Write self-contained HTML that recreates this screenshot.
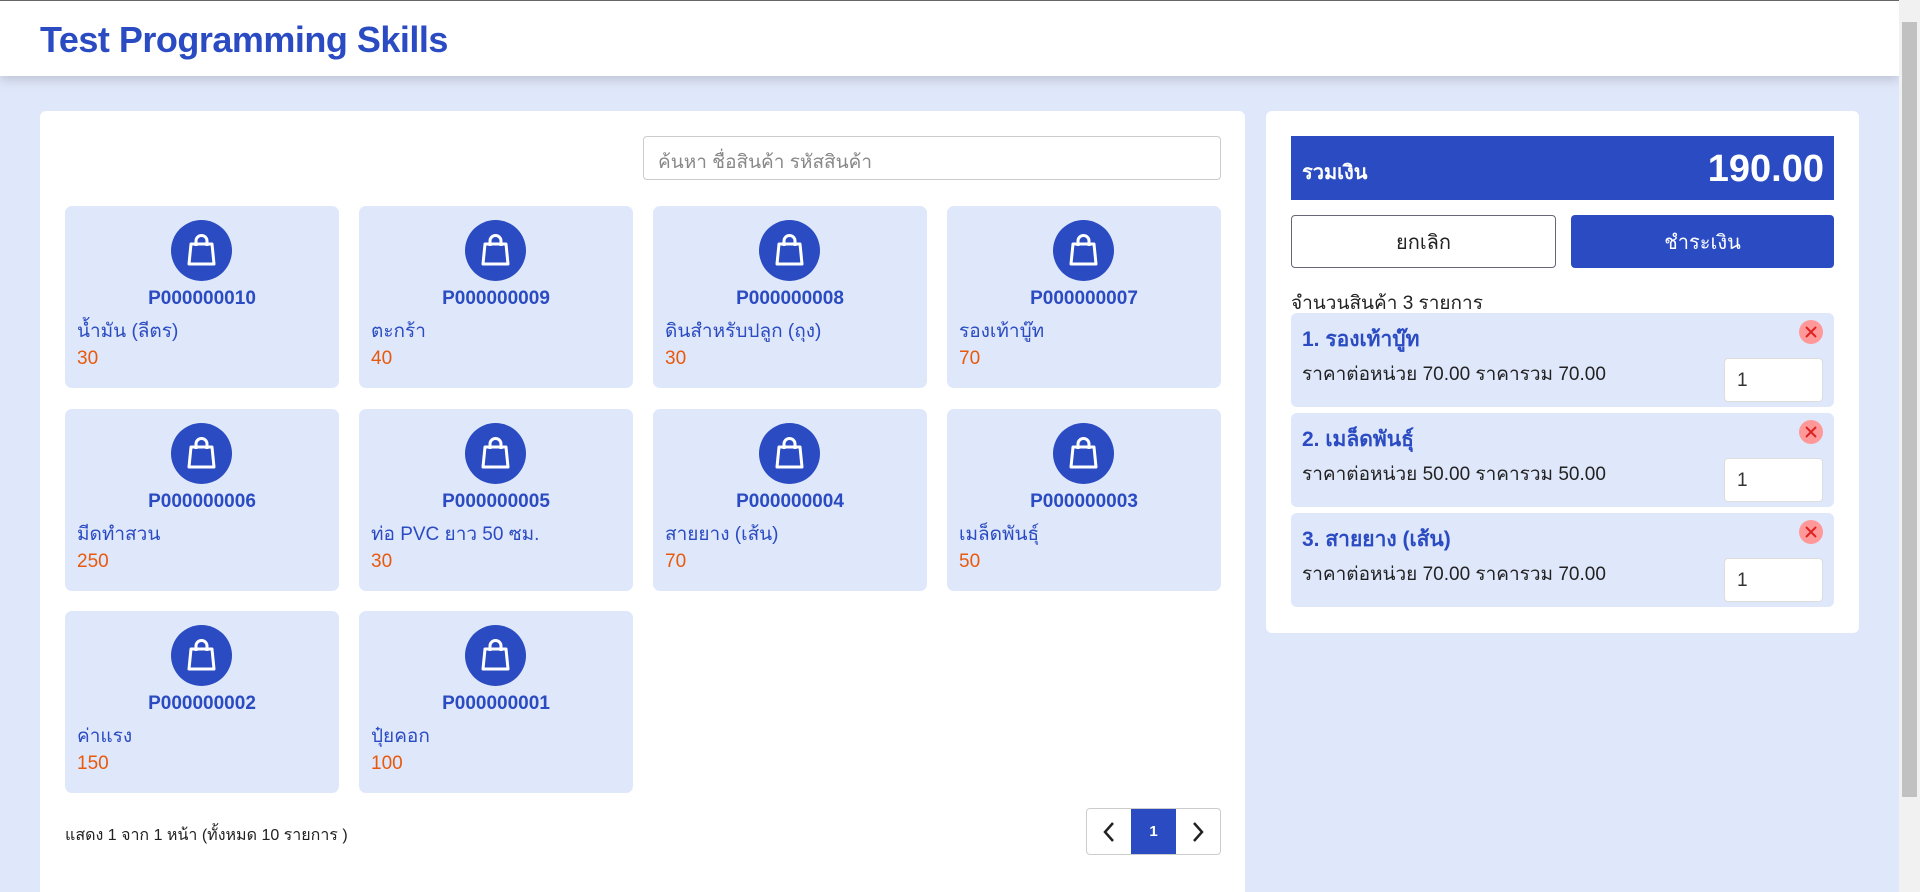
<!DOCTYPE html>
<html><head><meta charset="utf-8"><style>
*{box-sizing:border-box;margin:0;padding:0}
html{width:1920px;height:892px;overflow:hidden}
body{width:1920px;height:892px;overflow:hidden;background:#dfe7fa;font-family:"Liberation Sans","Noto Sans CJK SC",sans-serif;color:#222;position:relative}
.hdr{position:absolute;left:0;top:0;width:1899px;height:76px;background:#fff;border-top:1px solid #666;box-shadow:0 4px 10px rgba(0,0,0,.15)}
.hdr h1{position:absolute;left:40px;top:18px;font-size:36px;font-weight:bold;color:#2a4bc2;letter-spacing:-0.5px}
.sb{position:absolute;left:1899px;top:0;width:21px;height:892px;background:#f1f1f1}
.sb div{position:absolute;left:3px;top:22px;width:15px;height:775px;background:#c1c1c1}
.lp{position:absolute;left:40px;top:111px;width:1205px;height:781px;background:#fff;border-radius:6px 6px 0 0}
.rp{position:absolute;left:1266px;top:111px;width:593px;height:522px;background:#fff;border-radius:6px}
.search{position:absolute;left:603px;top:25px;width:578px;height:44px;border:1px solid #ccc;border-radius:4px;color:#888;font-size:19px;padding:10px 14px}
.card{position:absolute;width:274px;height:182px;background:#dfe7fa;border-radius:7px}
.ic{position:absolute;left:106px;top:14px;width:61px;height:61px;border-radius:50%;background:#2a4bc2}
.ic svg{position:absolute;left:15px;top:13px}
.code{position:absolute;top:82px;width:100%;text-align:center;font-weight:bold;color:#2a4bc2;font-size:19px}
.nm{position:absolute;left:12px;top:110px;color:#2a4bc2;font-size:19px}
.pr{position:absolute;left:12px;top:142px;color:#e8590c;font-size:19px}
.foot{position:absolute;left:25px;top:712px;font-size:16px}
.pg{position:absolute;left:1046px;top:697px;width:135px;height:47px;border:1px solid #ccc;border-radius:4px;display:flex}
.pg div{flex:1;display:flex;align-items:center;justify-content:center;font-size:26px}
.pg .a{background:#2a4bc2;color:#fff;font-size:15px;font-weight:bold}
.tot{position:absolute;left:25px;top:25px;width:543px;height:64px;background:#2a4bc2;color:#fff}
.tot .l{position:absolute;left:11px;top:20px;font-size:20px;font-weight:bold}
.tot .r{position:absolute;right:10px;top:12px;font-size:38px;font-weight:bold}
.btn{position:absolute;top:104px;height:53px;border-radius:4px;font-size:20px;display:flex;align-items:center;justify-content:center}
.cnt{position:absolute;left:25px;top:177px;font-size:19px}
.it{position:absolute;left:25px;width:543px;height:94px;background:#dfe7fa;border-radius:6px}
.it .t{position:absolute;left:11px;top:10px;font-size:21px;font-weight:bold;color:#2a4bc2}
.it .d{position:absolute;left:11px;top:46px;font-size:19px}
.it .q{position:absolute;left:433px;top:45px;width:99px;height:44px;background:#fff;border:1px solid #ddd;border-radius:4px;font-size:19px;padding:11px 12px;color:#333}
.it .x{position:absolute;left:508px;top:7px;width:24px;height:24px;border-radius:50%;background:#f99}
</style></head><body>
<div class="hdr"><h1>Test Programming Skills</h1></div>
<div class="sb"><div></div></div>
<div class="lp">
<div class="search">ค้นหา ชื่อสินค้า รหัสสินค้า</div>
<div class="foot">แสดง 1 จาก 1 หน้า (ทั้งหมด 10 รายการ )</div>
<div class="pg"><div><svg width="14" height="22"><path d="M11 2L3 11l8 9" fill="none" stroke="#222" stroke-width="2.5"/></svg></div><div class="a">1</div><div><svg width="14" height="22"><path d="M3 2l8 9-8 9" fill="none" stroke="#222" stroke-width="2.5"/></svg></div></div>
</div>
<div class="rp">
<div class="tot"><span class="l">รวมเงิน</span><span class="r">190.00</span></div>
<div class="btn" style="left:25px;width:265px;border:1px solid #667">ยกเลิก</div>
<div class="btn" style="left:305px;width:263px;background:#2a4bc2;color:#fff">ชำระเงิน</div>
<div class="cnt">จำนวนสินค้า 3 รายการ</div>
<div class="it" style="top:202px"><div class="t">1. รองเท้าบู๊ท</div><div class="d">ราคาต่อหน่วย 70.00 ราคารวม 70.00</div><div class="q">1</div><div class="x"><svg width="24" height="24"><path d="M7 7L17 17M17 7L7 17" stroke="#d22" stroke-width="2"/></svg></div></div>
<div class="it" style="top:302px"><div class="t">2. เมล็ดพันธุ์</div><div class="d">ราคาต่อหน่วย 50.00 ราคารวม 50.00</div><div class="q">1</div><div class="x"><svg width="24" height="24"><path d="M7 7L17 17M17 7L7 17" stroke="#d22" stroke-width="2"/></svg></div></div>
<div class="it" style="top:402px"><div class="t">3. สายยาง (เส้น)</div><div class="d">ราคาต่อหน่วย 70.00 ราคารวม 70.00</div><div class="q">1</div><div class="x"><svg width="24" height="24"><path d="M7 7L17 17M17 7L7 17" stroke="#d22" stroke-width="2"/></svg></div></div>
</div>
<div style="position:absolute;left:0;top:0">
<div class="card" style="left:65px;top:206px"><div class="ic"><svg width="31" height="34" viewBox="0 0 31 34"><path d="M10 13V8a5.5 5.5 0 0 1 11 0v5M5 11h21l2 20H3z" fill="none" stroke="#fff" stroke-width="3" stroke-linejoin="round"/></svg></div><div class="code">P000000010</div><div class="nm">น้ำมัน (ลีตร)</div><div class="pr">30</div></div>
<div class="card" style="left:359px;top:206px"><div class="ic"><svg width="31" height="34" viewBox="0 0 31 34"><path d="M10 13V8a5.5 5.5 0 0 1 11 0v5M5 11h21l2 20H3z" fill="none" stroke="#fff" stroke-width="3" stroke-linejoin="round"/></svg></div><div class="code">P000000009</div><div class="nm">ตะกร้า</div><div class="pr">40</div></div>
<div class="card" style="left:653px;top:206px"><div class="ic"><svg width="31" height="34" viewBox="0 0 31 34"><path d="M10 13V8a5.5 5.5 0 0 1 11 0v5M5 11h21l2 20H3z" fill="none" stroke="#fff" stroke-width="3" stroke-linejoin="round"/></svg></div><div class="code">P000000008</div><div class="nm">ดินสำหรับปลูก (ถุง)</div><div class="pr">30</div></div>
<div class="card" style="left:947px;top:206px"><div class="ic"><svg width="31" height="34" viewBox="0 0 31 34"><path d="M10 13V8a5.5 5.5 0 0 1 11 0v5M5 11h21l2 20H3z" fill="none" stroke="#fff" stroke-width="3" stroke-linejoin="round"/></svg></div><div class="code">P000000007</div><div class="nm">รองเท้าบู๊ท</div><div class="pr">70</div></div>
<div class="card" style="left:65px;top:409px"><div class="ic"><svg width="31" height="34" viewBox="0 0 31 34"><path d="M10 13V8a5.5 5.5 0 0 1 11 0v5M5 11h21l2 20H3z" fill="none" stroke="#fff" stroke-width="3" stroke-linejoin="round"/></svg></div><div class="code">P000000006</div><div class="nm">มีดทำสวน</div><div class="pr">250</div></div>
<div class="card" style="left:359px;top:409px"><div class="ic"><svg width="31" height="34" viewBox="0 0 31 34"><path d="M10 13V8a5.5 5.5 0 0 1 11 0v5M5 11h21l2 20H3z" fill="none" stroke="#fff" stroke-width="3" stroke-linejoin="round"/></svg></div><div class="code">P000000005</div><div class="nm">ท่อ PVC ยาว 50 ซม.</div><div class="pr">30</div></div>
<div class="card" style="left:653px;top:409px"><div class="ic"><svg width="31" height="34" viewBox="0 0 31 34"><path d="M10 13V8a5.5 5.5 0 0 1 11 0v5M5 11h21l2 20H3z" fill="none" stroke="#fff" stroke-width="3" stroke-linejoin="round"/></svg></div><div class="code">P000000004</div><div class="nm">สายยาง (เส้น)</div><div class="pr">70</div></div>
<div class="card" style="left:947px;top:409px"><div class="ic"><svg width="31" height="34" viewBox="0 0 31 34"><path d="M10 13V8a5.5 5.5 0 0 1 11 0v5M5 11h21l2 20H3z" fill="none" stroke="#fff" stroke-width="3" stroke-linejoin="round"/></svg></div><div class="code">P000000003</div><div class="nm">เมล็ดพันธุ์</div><div class="pr">50</div></div>
<div class="card" style="left:65px;top:611px"><div class="ic"><svg width="31" height="34" viewBox="0 0 31 34"><path d="M10 13V8a5.5 5.5 0 0 1 11 0v5M5 11h21l2 20H3z" fill="none" stroke="#fff" stroke-width="3" stroke-linejoin="round"/></svg></div><div class="code">P000000002</div><div class="nm">ค่าแรง</div><div class="pr">150</div></div>
<div class="card" style="left:359px;top:611px"><div class="ic"><svg width="31" height="34" viewBox="0 0 31 34"><path d="M10 13V8a5.5 5.5 0 0 1 11 0v5M5 11h21l2 20H3z" fill="none" stroke="#fff" stroke-width="3" stroke-linejoin="round"/></svg></div><div class="code">P000000001</div><div class="nm">ปุ๋ยคอก</div><div class="pr">100</div></div>
</div>
</body></html>
